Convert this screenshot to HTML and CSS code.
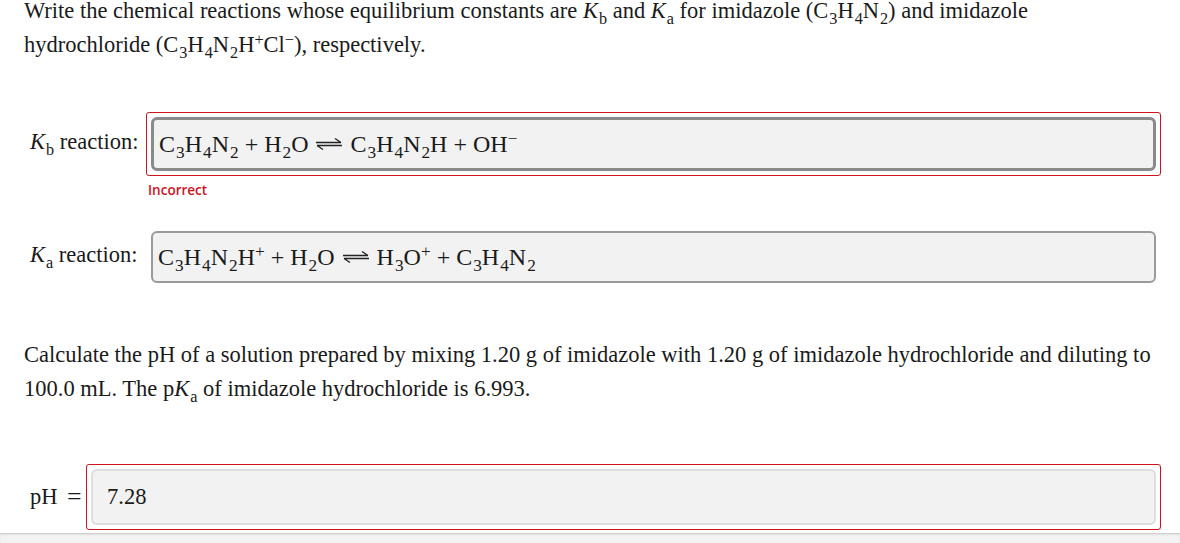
FILE: index.html
```html
<!DOCTYPE html>
<html lang="en">
<head>
<meta charset="utf-8">
<title>Imidazole buffer</title>
<link rel="stylesheet" href="styles.css">
</head>
<body>
<main class="page">
  <p class="text intro">Write the chemical reactions whose equilibrium constants are <i>K</i><sub>b</sub> and <i>K</i><sub>a</sub> for imidazole (C<sub>3</sub>H<sub>4</sub>N<sub>2</sub>) and imidazole hydrochloride (C<sub>3</sub>H<sub>4</sub>N<sub>2</sub>H<sup>+</sup>Cl<sup>−</sup>), respectively.</p>

  <div class="row row-kb">
    <span class="label"><i>K</i><sub>b</sub> reaction:</span>
    <div class="answer answer-wrong">
      <div class="field field-dark">
        <span class="eq">C<sub>3</sub>H<sub>4</sub>N<sub>2</sub> + H<sub>2</sub>O <svg class="arrow" viewBox="0 0 28 12" width="28" height="12"><path d="M1 4.5H26M26 4.5L20 0.5M27 7.5H2M2 7.5L8 11.5" fill="none" stroke="#222" stroke-width="1.3"/></svg> C<sub>3</sub>H<sub>4</sub>N<sub>2</sub>H + OH<sup>−</sup></span>
      </div>
    </div>
  </div>
  <p class="feedback">Incorrect</p>

  <div class="row row-ka">
    <span class="label"><i>K</i><sub>a</sub> reaction:</span>
    <div class="answer">
      <div class="field field-mid">
        <span class="eq">C<sub>3</sub>H<sub>4</sub>N<sub>2</sub>H<sup>+</sup> + H<sub>2</sub>O <svg class="arrow" viewBox="0 0 28 12" width="28" height="12"><path d="M1 4.5H26M26 4.5L20 0.5M27 7.5H2M2 7.5L8 11.5" fill="none" stroke="#222" stroke-width="1.3"/></svg> H<sub>3</sub>O<sup>+</sup> + C<sub>3</sub>H<sub>4</sub>N<sub>2</sub></span>
      </div>
    </div>
  </div>

  <p class="text calc">Calculate the pH of a solution prepared by mixing 1.20 g of imidazole with 1.20 g of imidazole hydrochloride and diluting to 100.0 mL. The p<i>K</i><sub>a</sub> of imidazole hydrochloride is 6.993.</p>

  <div class="row row-ph">
    <span class="label label-ph">pH<span class="equals">=</span></span>
    <div class="answer answer-wrong answer-ph">
      <div class="field field-light">
        <span class="value">7.28</span>
      </div>
    </div>
  </div>
</main>
<footer class="bottom-bar"></footer>
</body>
</html>
```

FILE: styles.css
```css
html, body {
  margin: 0;
  padding: 0;
  background: #ffffff;
  overflow: hidden;
}

body {
  font-family: "Liberation Serif", "Times New Roman", serif;
  color: #1a1a1a;
}

.page {
  padding: 0 19px 0 24px;
}

.text {
  margin: 0 5px 0 0;
  font-size: 22.5px;
  line-height: 34px;
}

.intro {
  margin-top: -6px;
}

sub, sup {
  font-size: 72%;
  line-height: 0;
  position: relative;
  vertical-align: baseline;
}

sub {
  top: 0.36em;
  margin-left: 1px;
}

sup {
  top: -0.42em;
}

.row {
  display: flex;
  align-items: center;
  padding-left: 6px;
}

.label {
  width: 116px;
  flex: none;
  font-size: 22.5px;
  white-space: nowrap;
  position: relative;
  top: -2px;
}

.label-ph {
  width: 56px;
  top: 0;
}

.equals {
  display: inline-block;
  margin-left: 10px;
  transform: scaleX(1.15);
}

.row-kb {
  margin-top: 50px;
}

.answer {
  flex: 1;
  border: 1px solid transparent;
  border-radius: 3px;
  padding: 4px;
}

.answer-wrong {
  border-color: #d0121f;
}

.field {
  box-sizing: border-box;
  height: 54px;
  display: flex;
  align-items: center;
  background: #f2f2f2;
  border-radius: 6px;
  padding-left: 5px;
}

.field-dark {
  border: 3px solid #8a8a8a;
}

.field-mid {
  height: 52px;
  border: 2px solid #9a9a9a;
}

.field-light {
  height: 56px;
  border: 2px solid #dedede;
  padding-left: 14px;
}

.eq {
  font-size: 24px;
  white-space: nowrap;
}

.arrow {
  vertical-align: middle;
  margin: 0 1px;
  position: relative;
  top: -2px;
}

.feedback {
  margin: 5px 0 0 124px;
  font-family: "Open Sans", "Liberation Sans", sans-serif;
  font-weight: 600;
  font-size: 13.5px;
  line-height: 18px;
  color: #d0121f;
}

.row-ka {
  margin-top: 27px;
}

.calc {
  margin-top: 50px;
}

.row-ph {
  margin-top: 58px;
}

.value {
  font-size: 22.5px;
}

.bottom-bar {
  margin-top: 3px;
  height: 20px;
  background: #f3f3f3;
  border-top: 1px solid #cfcfcf;
  box-shadow: inset 0 1px 2px rgba(0, 0, 0, 0.08);
}
```
